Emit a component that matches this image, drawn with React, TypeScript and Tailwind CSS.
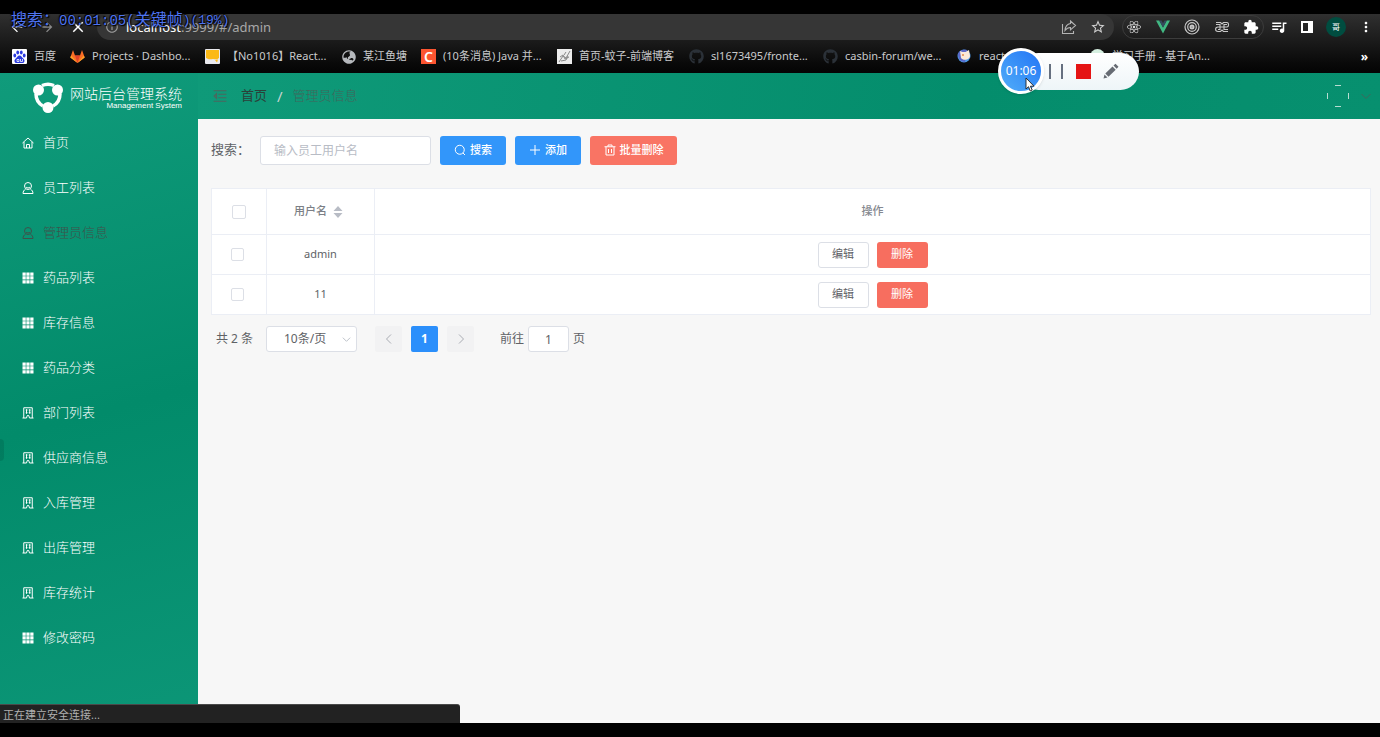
import {ReactNode} from "react";
import {FaGithub, FaGlobeAsia, FaReact} from "react-icons/fa";
import {
    MdArrowBack,
    MdArrowForward,
    MdClose,
    MdExtension,
    MdInfoOutline,
    MdMoreVert,
    MdQueueMusic,
    MdStarBorder
} from "react-icons/md";

interface IconProps {
    className?: string;
}

interface LineIconProps extends IconProps {
    children: ReactNode;
}

interface Bookmark {
    title: string;
    width: string;
    icon: ReactNode;
}

interface MenuItem {
    title: string;
    icon: ReactNode;
    active?: boolean;
}

function LineIcon({className = "size-3", children}: LineIconProps) {
    return (
        <svg viewBox="0 0 24 24" fill="none" stroke="currentColor" strokeWidth="2" className={className}>
            {children}
        </svg>
    )
}

function HouseIcon() {
    return (
        <LineIcon>
            <path d="M1 12 12 2 23 12M4 10v12h16V10M9 22v-7h6v7"/>
        </LineIcon>
    )
}

function UserIcon() {
    return (
        <LineIcon>
            <circle cx="12" cy="8" r="7"/>
            <path d="M8 10c1.500 2.500 6.500 2.500 8 0M7 14.500C4 16 2 19 2 23h20c0-4-2-7-5-8.500"/>
        </LineIcon>
    )
}

function GridIcon() {
    return (
        <svg viewBox="0 0 24 24" fill="currentColor" className="size-3">
            <path d="M1 1h6.500v6.500H1zM8.700 1h6.500v6.500H8.700zM16.500 1H23v6.500h-6.500zM1 8.700h6.500v6.500H1zM8.700 8.700h6.500v6.500H8.700zM16.500 8.700H23v6.500h-6.500zM1 16.500h6.500V23H1zM8.700 16.500h6.500V23H8.700zM16.500 16.500H23V23h-6.500z"/>
        </svg>
    )
}

function BuildingIcon() {
    return (
        <LineIcon>
            <path d="M3.500 22V1.500h17V22M1 22h8l1.500-5h3l1.500 5h8M7.500 6h3.500M13.500 6h3.500M7.500 11.500h3.500M13.500 11.500h3.500M9 4.500v9M15.500 4.500v9"/>
        </LineIcon>
    )
}

function SearchIcon() {
    return (
        <LineIcon>
            <circle cx="11.500" cy="11.500" r="9"/>
            <path d="m18 18 4 4"/>
        </LineIcon>
    )
}

function PlusIcon() {
    return (
        <LineIcon>
            <path d="M12 2v20M2 12h20"/>
        </LineIcon>
    )
}

function TrashIcon() {
    return (
        <LineIcon>
            <path d="M1 5.500h22M4 5.500V22h16V5.500M8 5V2h8v3M9 10v8M15 10v8"/>
        </LineIcon>
    )
}

function ArrowIcon({d, className}: { d: string; className?: string }) {
    return (
        <LineIcon className={className}>
            <path d={d}/>
        </LineIcon>
    )
}

function LogoMark() {
    return (
        <svg viewBox="0 0 32 32" className="h-8 w-8 shrink-0" fill="none">
            <path d="M10 3.500c4-1.800 8-1.800 12 0M4 12c0 5 2.500 9.500 7 12M28 12c0 5-2.500 9.500-7 12"
                  stroke="#fff" strokeWidth="3.500"/>
            <circle cx="6.500" cy="8" r="5.500" fill="#fff"/>
            <circle cx="25.500" cy="8" r="5.500" fill="#fff"/>
            <circle cx="16" cy="25.500" r="5.500" fill="#fff"/>
        </svg>
    )
}

function BaiduIcon() {
    return (
        <svg viewBox="0 0 15 15" className="size-[15px]">
            <rect width="15" height="15" rx="1" fill="#fff"/>
            <g fill="#2b3ae0">
                <ellipse cx="2.800" cy="6.500" rx="1.400" ry="1.900"/>
                <ellipse cx="5.700" cy="3.500" rx="1.400" ry="2"/>
                <ellipse cx="9.300" cy="3.500" rx="1.400" ry="2"/>
                <ellipse cx="12.200" cy="6.500" rx="1.400" ry="1.900"/>
                <path d="M7.500 6.500c2 0 2.500 2 4 3.200 2 1.800.8 4.300-1.200 4.300H4.700c-2 0-3.200-2.500-1.200-4.300 1.500-1.200 2-3.200 4-3.200z"/>
            </g>
            <path d="M5 10.500h2v2H5zM8.500 10v2.500h2V10" stroke="#fff" strokeWidth=".8" fill="none"/>
        </svg>
    )
}

function GitlabIcon() {
    return (
        <svg viewBox="0 0 15 15" className="size-[15px]">
            <path d="M3 1 5 6.500h5L12 1l2.700 7.500L7.500 14 .3 8.500z" fill="#fc6d26"/>
            <path d="M5 6.500h5L7.500 14z" fill="#e24329"/>
            <path d="M1.200 6.500.3 8.500 7.500 14zM13.800 6.500l.9 2L7.500 14z" fill="#fca326"/>
        </svg>
    )
}

function NoteIcon() {
    return (
        <svg viewBox="0 0 15 15" className="size-[15px]">
            <rect width="15" height="15" rx="1" fill="#e9e9ee"/>
            <path d="M1 1h13v8c-2 2-4 1-6 1s-4 1-7-1z" fill="#fbb917"/>
            <path d="m10 11 3-.5-1 3z" fill="#fbb917"/>
        </svg>
    )
}

function SketchIcon() {
    return (
        <svg viewBox="0 0 15 15" className="size-[15px]">
            <rect width="15" height="15" fill="#ececec"/>
            <path d="m2 13 4-6 3 2 4-7M3 8l3-2 2 4 4-2M4 12l5-1 2-4M9 3 7 6" stroke="#888" fill="none"/>
        </svg>
    )
}

function CatIcon() {
    return (
        <svg viewBox="0 0 15 15" className="size-[15px]">
            <circle cx="7" cy="7" r="6.500" fill="#4e9be8"/>
            <path d="M1 5c1-4 6-5 9-4l-2 12C4 13 1 10 1 5z" fill="#5b68c8"/>
            <path d="m3 2 2.500 1h3L12 1l1 6c0 4-7 5-9 2z" fill="#fbe9d8"/>
            <circle cx="6" cy="6" r="1" fill="#e58a4a"/>
        </svg>
    )
}

function ShareIcon() {
    return (
        <svg viewBox="0 0 16 16" className="size-4" fill="none" stroke="#b4b4b4" strokeWidth="1.100">
            <path d="M1.500 5v9.500h11V12M9.500 2 14.500 6.500l-5 4.300V8.500C7 8.500 5.500 9.500 4 11.500c.3-4 2-6.500 5.500-7z"/>
        </svg>
    )
}

function VueIcon() {
    return (
        <svg viewBox="0 0 16 16" className="size-4">
            <path d="M1 1.500h3.200L8 8.500l3.800-7H15L8 14.500z" fill="#41b883"/>
            <path d="M4.200 1.500H6.500L8 4.300l1.500-2.800h2.300L8 8.500z" fill="#35495e"/>
        </svg>
    )
}

function TargetIcon() {
    return (
        <svg viewBox="0 0 16 16" className="size-4" fill="none" stroke="#c8c8c8" strokeWidth="1.200">
            <circle cx="8" cy="8" r="7"/>
            <circle cx="8" cy="8" r="4.300"/>
            <circle cx="8" cy="8" r="1.500" strokeWidth="2"/>
        </svg>
    )
}

function KnotIcon() {
    return (
        <svg viewBox="0 0 16 16" className="size-4" fill="none" stroke="#c8c8c8" strokeWidth="1.100">
            <path d="M2 3.500h4.500L8 5l1.500-1.500H13c2 0 2 4.500 0 4.500H4C.8 8 .8 12.500 4 12.500h2.500L8 11l1.500 1.500H14M2 5.500h4v5H4M14 10.500h-4v-5h3"/>
        </svg>
    )
}

function PanelIcon() {
    return (
        <svg viewBox="0 0 14 14" className="size-[14px]">
            <path d="M1 1h12v12H1zM3 3v8h5V3z" fill="#fff" fillRule="evenodd"/>
        </svg>
    )
}

function PencilIcon() {
    return (
        <svg viewBox="0 0 16 16" className="size-4" fill="#666b73">
            <path d="M10.500 2.500 12.500.8l3 3-1.800 1.900zM9.500 3.500l3.200 3.200-7.200 7-3.200-3.200zM1.500 11.500l3 3-4 1z"/>
        </svg>
    )
}

function CursorIcon({className}: IconProps) {
    return (
        <svg viewBox="0 0 10 15" className={className}>
            <path d="M1 1v11l2.500-2.300L5.200 14l2-1-1.800-3.800H9z" fill="#fff" stroke="#222" strokeWidth=".9"/>
        </svg>
    )
}

const bookmarks: Bookmark[] = [
    {title: "百度", width: "w-[58px]", icon: <BaiduIcon/>},
    {title: "Projects · Dashbo...", width: "w-[135px]", icon: <GitlabIcon/>},
    {title: "【No1016】React...", width: "w-[137px]", icon: <NoteIcon/>},
    {title: "某江鱼塘", width: "w-[79px]", icon: <FaGlobeAsia className="size-[14px] text-[#b5b8bc]"/>},
    {
        title: "(10条消息) Java 并...",
        width: "w-[136px]",
        icon: <span className="flex size-[15px] items-center justify-center bg-[#fc5531] text-sm font-semibold text-white">C</span>
    },
    {title: "首页-蚊子-前端博客", width: "w-[132px]", icon: <SketchIcon/>},
    {title: "sl1673495/fronte...", width: "w-[134px]", icon: <FaGithub className="size-[15px] text-[#2b3138]"/>},
    {title: "casbin-forum/we...", width: "w-[134px]", icon: <FaGithub className="size-[15px] text-[#2b3138]"/>},
    {title: "react", width: "w-[133px]", icon: <CatIcon/>},
    {title: "学习手册 - 基于An...", width: "w-[134px]", icon: <span className="size-[15px] rounded-full bg-[#d5efe0]"/>}
]

const menu: MenuItem[] = [
    {title: "首页", icon: <HouseIcon/>},
    {title: "员工列表", icon: <UserIcon/>},
    {title: "管理员信息", icon: <UserIcon/>, active: true},
    {title: "药品列表", icon: <GridIcon/>},
    {title: "库存信息", icon: <GridIcon/>},
    {title: "药品分类", icon: <GridIcon/>},
    {title: "部门列表", icon: <BuildingIcon/>},
    {title: "供应商信息", icon: <BuildingIcon/>},
    {title: "入库管理", icon: <BuildingIcon/>},
    {title: "出库管理", icon: <BuildingIcon/>},
    {title: "库存统计", icon: <BuildingIcon/>},
    {title: "修改密码", icon: <GridIcon/>}
]

const users = ["admin", "11"]

function BrowserBar() {
    return (
        <div className="bg-linear-to-b from-[#303030] via-[#1b1b1b] via-45% to-[#040404]">
            <div className="flex h-[26px] items-center">
                <div className="flex w-[97px] shrink-0 items-center gap-[14px] pl-[9px] text-white">
                    <button aria-label="后退"><MdArrowBack className="size-4"/></button>
                    <button aria-label="前进"><MdArrowForward className="size-4 text-[#8a8a8a]"/></button>
                    <button aria-label="停止"><MdClose className="size-[18px]"/></button>
                </div>
                <div className="flex h-[26px] flex-1 items-center gap-[7px] rounded-full bg-[#363636] px-2">
                    <MdInfoOutline className="size-[14px] shrink-0 text-[#9a9a9a]"/>
                    <div className="flex-1 text-[13px] leading-6 text-[#a8a8a8]">
                        <span className="text-white">localhost</span>:9999/#/admin
                    </div>
                    <div className="flex items-center gap-[13px]">
                        <button aria-label="分享"><ShareIcon/></button>
                        <button aria-label="收藏"><MdStarBorder className="size-4 text-[#d0d0d0]"/></button>
                    </div>
                </div>
                <div className="ml-2 flex h-6 w-[142px] items-center justify-between rounded-full border border-[#3c3c3c] px-1">
                    <FaReact className="size-[14px] text-[#dcdcdc]"/>
                    <VueIcon/>
                    <TargetIcon/>
                    <KnotIcon/>
                    <MdExtension className="size-4 text-white"/>
                </div>
                <div className="flex items-center gap-3 px-[6px] text-white">
                    <MdQueueMusic className="size-[18px]"/>
                    <PanelIcon/>
                    <span className="flex size-5 items-center justify-center rounded-full bg-[#004d40] text-[8px]">哥</span>
                    <button aria-label="更多"><MdMoreVert className="size-4"/></button>
                </div>
            </div>
            <nav className="flex h-[33px] items-center overflow-hidden px-3 text-[11px] text-[#c9cacc]">
                {
                    bookmarks.map((bookmark) => (
                        <a key={bookmark.title} href="#"
                           className={`flex shrink-0 items-center gap-[7px] whitespace-nowrap ${bookmark.width}`}>
                            <span className="flex shrink-0">{bookmark.icon}</span>
                            {bookmark.title}
                        </a>
                    ))
                }
                <button className="ml-auto text-xs font-bold text-white">»</button>
            </nav>
        </div>
    )
}

function Recorder() {
    return (
        <div className="absolute top-[48px] left-[998px] flex h-[46px] items-center">
            <div className="z-10 flex size-[46px] items-center justify-center rounded-full border-3 border-white bg-linear-to-tr from-[#52adf8] to-[#2474f5] text-xs text-white shadow">
                01:06
            </div>
            <div className="-ml-6 flex h-[37px] w-[119px] items-center rounded-full bg-linear-to-b from-white to-[#eef5f8] pl-[29px]">
                <button aria-label="暂停" className="h-[15px] w-[14px] border-x-2 border-[#667080]"/>
                <button aria-label="结束" className="ml-[13px] size-[15px] bg-[#e51414]"/>
                <button aria-label="标注" className="ml-3"><PencilIcon/></button>
            </div>
            <CursorIcon className="absolute top-[29px] left-[27px] z-20 h-[15px] w-[10px]"/>
        </div>
    )
}

function Sidebar() {
    return (
        <aside className="w-[198px] shrink-0 bg-linear-[165deg,#109b7b,#028b6a_52%,#0c9677]">
            <div className="flex h-[46px] items-center gap-[6px] pt-1 pl-8 text-white">
                <LogoMark/>
                <div className="flex flex-col items-end">
                    <span className="text-sm leading-4 font-light">网站后台管理系统</span>
                    <span className="font-['Liberation_Sans'] text-[8px] leading-2">Management System</span>
                </div>
            </div>
            <ul className="pt-px text-[13px] font-light">
                {
                    menu.map((item) => (
                        <li key={item.title}>
                            <a href="#"
                               className={`flex h-[45px] items-center gap-[9px] pl-[22px] ${item.active ? "text-[#3f524b]" : "text-white"}`}>
                                {item.icon}
                                {item.title}
                            </a>
                        </li>
                    ))
                }
            </ul>
        </aside>
    )
}

function Topbar() {
    return (
        <header className="flex h-[46px] items-center bg-linear-[100deg,#0f9a79,#048d6c_65%,#07906f] pl-[15px] pr-2 text-[13px]">
            <button aria-label="折叠菜单">
                <LineIcon className="size-[14px] text-[#4d665d]">
                    <path d="M1 3h22M9 9h14M9 15h14M1 21h22M6 8 2 12l4 4z"/>
                </LineIcon>
            </button>
            <a href="#" className="ml-[14px] text-[#2b4039]">首页</a>
            <span className="mx-[10px] text-[15px] text-[#c5d3d0]">/</span>
            <span className="font-light text-[#41665b]">管理员信息</span>
            <button aria-label="账户" className="ml-auto flex items-center gap-[10px]">
                <svg viewBox="0 0 24 24" className="size-6" stroke="#b9ddd2" fill="none">
                    <path d="M9 1.500h6M9 22.500h6M1.500 9v6M22.500 9v6"/>
                </svg>
                <ArrowIcon d="m3 8 9 9 9-9" className="size-3 text-[#41665b]"/>
            </button>
        </header>
    )
}

function SearchBar() {
    return (
        <form className="flex h-[30px] items-center gap-[9px] text-[11px] font-medium text-white">
            <label htmlFor="keyword" className="w-10 text-[13px] font-normal text-[#606266]">搜索：</label>
            <input id="keyword" placeholder="输入员工用户名"
                   className="h-[29px] w-[171px] rounded-[3px] border border-[#dcdfe6] bg-white px-[13px] text-xs font-normal text-[#606266] placeholder:text-[#b8bcc5]"/>
            <button type="button" className="flex h-[29px] w-[66px] items-center justify-center gap-1 rounded-[3px] bg-[#3296fa]">
                <SearchIcon/>搜索
            </button>
            <button type="button" className="flex h-[29px] w-[66px] items-center justify-center gap-1 rounded-[3px] bg-[#3296fa]">
                <PlusIcon/>添加
            </button>
            <button type="button" className="flex h-[29px] w-[87px] items-center justify-center gap-1 rounded-[3px] bg-[#f97464]">
                <TrashIcon/>批量删除
            </button>
        </form>
    )
}

function UserTable() {
    return (
        <table className="mt-[23px] w-full table-fixed border-collapse bg-white text-center text-[11px] text-[#606266]">
            <thead>
            <tr className="h-[46px]">
                <th className="w-[55px] border border-[#ebeef5]">
                    <input type="checkbox" aria-label="全选"
                           className="mx-auto block size-[14px] appearance-none rounded-[2px] border border-[#dcdfe6] bg-white"/>
                </th>
                <th className="w-[108px] border border-[#ebeef5] font-medium text-[#7c7f86]">
                    <span className="flex items-center justify-center gap-[6px] pr-1">
                        用户名
                        <svg viewBox="0 0 10 12" className="h-3 w-[10px]" fill="#b8bcc5">
                            <path d="M5 0 9.500 5h-9zM5 12 .5 7h9z"/>
                        </svg>
                    </span>
                </th>
                <th className="border border-[#ebeef5] font-medium text-[#85888f]">操作</th>
            </tr>
            </thead>
            <tbody>
            {
                users.map((user) => (
                    <tr key={user} className="h-10">
                        <td className="border border-[#ebeef5] pr-1">
                            <input type="checkbox" aria-label={user}
                                   className="mx-auto block size-[13px] appearance-none rounded-[2px] border border-[#dcdfe6] bg-white"/>
                        </td>
                        <td className="border border-[#ebeef5]">{user}</td>
                        <td className="border border-[#ebeef5]">
                            <div className="flex justify-center gap-2">
                                <button className="h-[26px] w-[51px] rounded-[3px] border border-[#dcdfe6] bg-white">编辑</button>
                                <button className="h-[26px] w-[51px] rounded-[3px] bg-[#f76e5f] text-white">删除</button>
                            </div>
                        </td>
                    </tr>
                ))
            }
            </tbody>
        </table>
    )
}

function Pagination() {
    return (
        <div className="flex items-center pt-[11px] pl-[5px] text-xs text-[#606266]">
            <span className="w-[50px]">共 2 条</span>
            <div className="relative">
                <select aria-label="每页条数"
                        className="h-[26px] w-[91px] appearance-none rounded-[3px] border border-[#dcdfe6] bg-white pl-[17px]">
                    <option>10条/页</option>
                </select>
                <ArrowIcon d="m4 8 8 8 8-8" className="pointer-events-none absolute top-2 right-[5px] size-[11px] text-[#b8bcc5]"/>
            </div>
            <div className="ml-[18px] flex gap-[9px]">
                <button aria-label="上一页" className="flex h-[26px] w-[27px] items-center justify-center rounded-[2px] bg-[#f2f2f3]">
                    <ArrowIcon d="m16 3-9 9 9 9" className="size-3 text-[#a9acb3]"/>
                </button>
                <button className="h-[26px] w-[27px] rounded-[2px] bg-[#2b8ffb] font-bold text-white">1</button>
                <button aria-label="下一页" className="flex h-[26px] w-[27px] items-center justify-center rounded-[2px] bg-[#f2f2f3]">
                    <ArrowIcon d="m8 3 9 9-9 9" className="size-3 text-[#a9acb3]"/>
                </button>
            </div>
            <label htmlFor="jump" className="ml-[26px]">前往</label>
            <input id="jump" defaultValue="1"
                   className="mx-1 h-[26px] w-[41px] rounded-[3px] border border-[#dcdfe6] bg-white text-center"/>
            <span>页</span>
        </div>
    )
}

export default function App() {
    return (
        <div className="relative flex min-h-screen flex-col bg-black py-[14px] font-['Noto_Sans','Noto_Sans_CJK_SC',sans-serif]">
            <BrowserBar/>
            <div className="relative flex flex-1 bg-[#f7f7f7]">
                <Sidebar/>
                <div className="min-w-0 flex-1">
                    <Topbar/>
                    <main className="pt-4 pr-[9px] pl-[13px]">
                        <SearchBar/>
                        <UserTable/>
                        <Pagination/>
                    </main>
                </div>
                <span className="absolute top-[366px] left-0 h-[22px] w-1 rounded-r bg-black/10"/>
                <div className="absolute bottom-0 left-0 h-[19px] w-1/3 rounded-tr-[3px] border-t border-[#4a4a4a] bg-[#222] pl-[3px] text-[11px] leading-[19px] text-[#b0b0b0]">
                    正在建立安全连接...
                </div>
            </div>
            <Recorder/>
            <div className="absolute top-[9px] left-[11px] flex items-center font-['Liberation_Mono','Noto_Sans_CJK_SC',monospace] text-base leading-6 whitespace-nowrap text-[#4f74f0] text-shadow-[0_0_2px_#000,1px_1px_1px_#000,-1px_-1px_1px_#000]">
                <span>搜索：</span>
                <span className="text-sm">00:01:05(</span>
                <span>关键帧</span>
                <span className="text-[13px]">)(19%)</span>
            </div>
        </div>
    )
}
